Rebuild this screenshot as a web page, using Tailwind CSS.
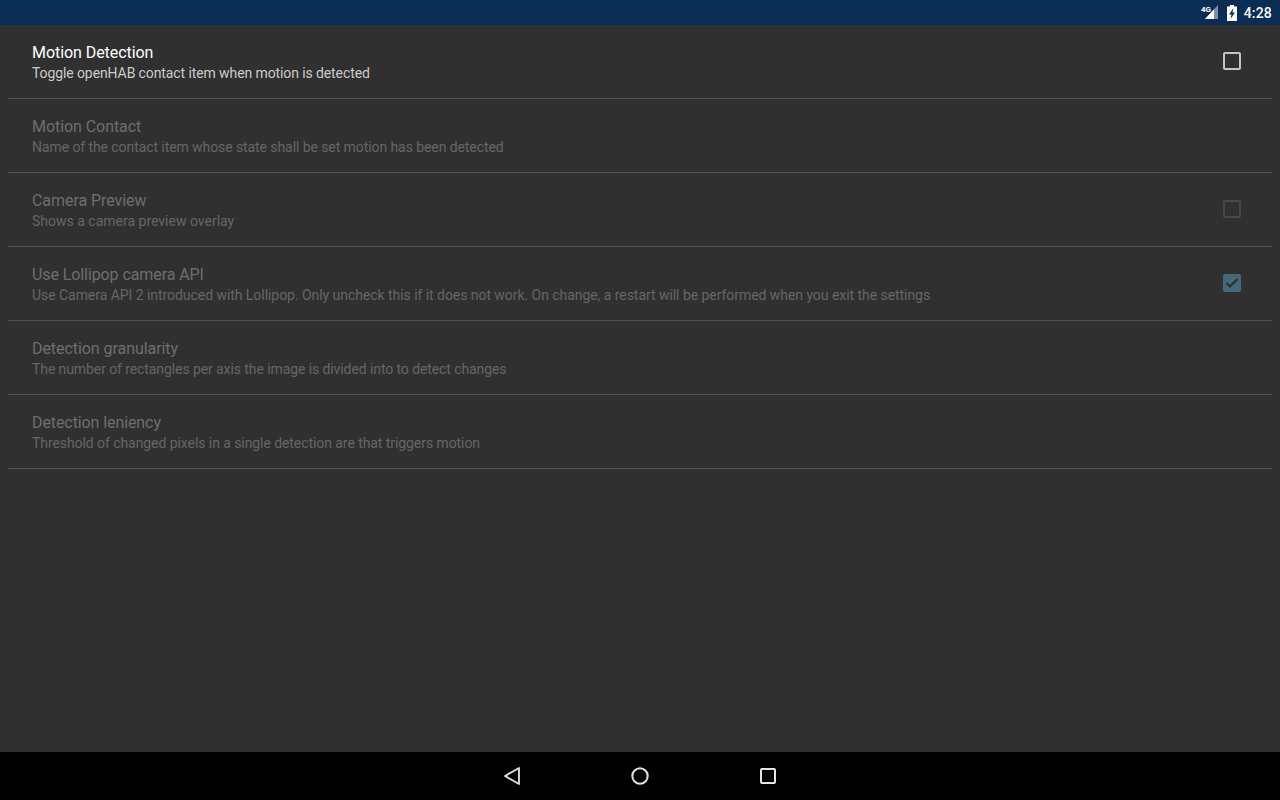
<!DOCTYPE html>
<html lang="en">
<head>
<meta charset="UTF-8">
<title>Settings</title>
<script src="https://cdn.jsdelivr.net/npm/@tailwindcss/browser@4"></script>
</head>
<body class="h-screen w-screen overflow-hidden flex flex-col bg-[#303030] font-['Roboto',sans-serif]">

  <!-- Status bar -->
  <div class="h-[25px] shrink-0 bg-[#0a2d55] flex items-center justify-end pr-2 text-white">
    <svg width="20" height="19" viewBox="0 0 20 19" class="mr-[9px]">
      <path d="M20 2V16H7Z" fill="#7f8fa3"/>
      <path d="M16 6.300V16H7Z" fill="#fff"/>
      <text x="3" y="9" font-size="8" font-weight="700" fill="#fff" font-family="Roboto">4G</text>
    </svg>
    <svg width="10" height="16" viewBox="0 0 10 16" class="mr-[7px]">
      <path d="M3 0h4v1.500h3V16H0V1.500h3z" fill="#fff"/>
      <path d="M6.500 3 2 9.500h2.500L3.500 14 8 7.500H5.500z" fill="#0a2d55"/>
    </svg>
    <span class="text-[14px] font-medium leading-none tracking-[0.2px]">4:28</span>
  </div>

  <!-- Settings list -->
  <div class="flex-1 px-2">
    <div class="h-[74px] border-b border-[#515151] pl-6 pr-[31px] flex items-center">
      <div class="flex-1 pt-[2px]">
        <div class="text-[16px] leading-[22px] text-white tracking-[-0.06px]">Motion Detection</div>
        <div class="text-[14px] leading-[19px] text-[#cbcbcb] tracking-[-0.1px]">Toggle openHAB contact item when motion is detected</div>
      </div>
      <div class="size-[18px] -mt-[2px] border-2 border-[#c4c4c4] rounded-[2px]"></div>
    </div>
    <div class="h-[74px] border-b border-[#515151] pl-6 pr-[31px] flex items-center">
      <div class="flex-1 pt-[2px]">
        <div class="text-[16px] leading-[22px] text-[#6e6e6e] tracking-[-0.06px]">Motion Contact</div>
        <div class="text-[14px] leading-[19px] text-[#666666] tracking-[-0.08px]">Name of the contact item whose state shall be set motion has been detected</div>
      </div>
    </div>
    <div class="h-[74px] border-b border-[#515151] pl-6 pr-[31px] flex items-center">
      <div class="flex-1 pt-[2px]">
        <div class="text-[16px] leading-[22px] text-[#6e6e6e] tracking-[-0.06px]">Camera Preview</div>
        <div class="text-[14px] leading-[19px] text-[#666666]">Shows a camera preview overlay</div>
      </div>
      <div class="size-[18px] -mt-[2px] border-2 border-[#484848] rounded-[2px]"></div>
    </div>
    <div class="h-[74px] border-b border-[#515151] pl-6 pr-[31px] flex items-center">
      <div class="flex-1 pt-[2px]">
        <div class="text-[16px] leading-[22px] text-[#6e6e6e] tracking-[-0.09px]">Use Lollipop camera API</div>
        <div class="text-[14px] leading-[19px] text-[#666666] tracking-[-0.05px]">Use Camera API 2 introduced with Lollipop. Only uncheck this if it does not work. On change, a restart will be performed when you exit the settings</div>
      </div>
      <div class="size-[18px] -mt-[2px] rounded-[2px] bg-[#44697c] flex items-center justify-center">
        <svg width="14" height="12" viewBox="0 0 14 12"><path d="M1.500 6l3.500 3.500 7.500-7.500" fill="none" stroke="#303030" stroke-width="2.200"/></svg>
      </div>
    </div>
    <div class="h-[74px] border-b border-[#515151] pl-6 pr-[31px] flex items-center">
      <div class="flex-1 pt-[2px]">
        <div class="text-[16px] leading-[22px] text-[#6e6e6e] tracking-[-0.06px]">Detection granularity</div>
        <div class="text-[14px] leading-[19px] text-[#666666] tracking-[-0.09px]">The number of rectangles per axis the image is divided into to detect changes</div>
      </div>
    </div>
    <div class="h-[74px] border-b border-[#515151] pl-6 pr-[31px] flex items-center">
      <div class="flex-1 pt-[2px]">
        <div class="text-[16px] leading-[22px] text-[#6e6e6e] tracking-[-0.09px]">Detection leniency</div>
        <div class="text-[14px] leading-[19px] text-[#666666] tracking-[-0.07px]">Threshold of changed pixels in a single detection are that triggers motion</div>
      </div>
    </div>
  </div>

  <!-- Nav bar -->
  <div class="h-12 shrink-0 bg-black flex items-center justify-center gap-[104px]">
    <svg width="24" height="24" viewBox="0 0 24 24"><path d="M19 4V20L5 12Z" fill="none" stroke="#e4e4e4" stroke-width="1.800" stroke-linejoin="round"/></svg>
    <svg width="24" height="24" viewBox="0 0 24 24"><circle cx="12" cy="12" r="7.700" fill="none" stroke="#e4e4e4" stroke-width="2"/></svg>
    <svg width="24" height="24" viewBox="0 0 24 24"><rect x="5" y="5" width="14" height="14" rx="1" fill="none" stroke="#e4e4e4" stroke-width="2"/></svg>
  </div>
</body>
</html>
